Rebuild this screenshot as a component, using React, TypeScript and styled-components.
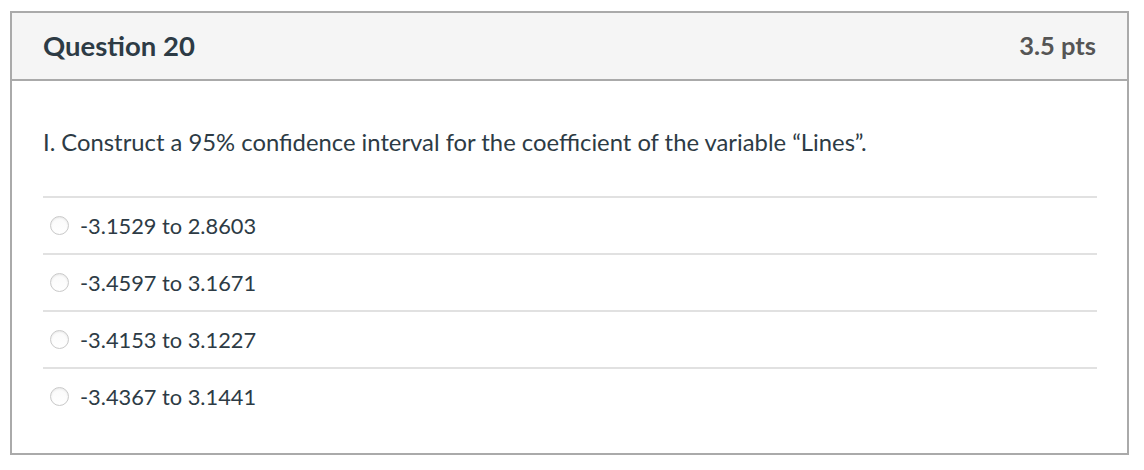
import React from "react";
import styled, { createGlobalStyle } from "styled-components";

const GlobalStyle = createGlobalStyle`
  body {
    margin: 0;
    background: #fff;
    font-family: Lato, "Open Sans", sans-serif;
    color: #2d3b45;
  }
`;

const Page = styled.div`
  padding: 11px 15px 13px 10px;
`;

const Card = styled.div`
  border: 2px solid #aaaaaa;
  background: #fff;
`;

const Header = styled.div`
  display: flex;
  align-items: center;
  justify-content: space-between;
  height: 66px;
  padding: 0 31px 0 31px;
  background: #f5f5f5;
  border-bottom: 2px solid #aaaaaa;
`;

const Title = styled.h2`
  margin: 0 0 1px;
  font-size: 27.5px;
  font-weight: 700;
  color: #2d3b45;
`;

const Points = styled.span`
  margin-bottom: 2px;
  font-size: 25.5px;
  font-weight: 700;
  color: #555555;
`;

const Body = styled.div`
  padding: 47px 30px 29px 31px;
`;

const Prompt = styled.p`
  margin: 0 0 40px;
  font-size: 23.8px;
  line-height: 28px;
`;

const AnswerRow = styled.label`
  display: flex;
  align-items: center;
  gap: 11px;
  height: 55px;
  padding-left: 7px;
  border-top: 2px solid #e1e1e1;
  font-size: 21.8px;
  color: #2d3b45;
`;

const Radio = styled.span`
  width: 17px;
  height: 17px;
  border-radius: 50%;
  border: 1px solid #c9c9c9;
  background: linear-gradient(#fafafa, #ffffff);
  box-shadow: inset 0 1px 2px rgba(0, 0, 0, 0.08);
`;

const answers = [
  "-3.1529 to 2.8603",
  "-3.4597 to 3.1671",
  "-3.4153 to 3.1227",
  "-3.4367 to 3.1441",
];

export default function App() {
  return (
    <Page>
      <GlobalStyle />
      <Card>
        <Header>
          <Title>Question 20</Title>
          <Points>3.5 pts</Points>
        </Header>
        <Body>
          <Prompt>
            I. Construct a 95% confidence interval for the coefficient of the variable “Lines”.
          </Prompt>
          {answers.map((a) => (
            <AnswerRow key={a}>
              <Radio />
              {a}
            </AnswerRow>
          ))}
        </Body>
      </Card>
    </Page>
  );
}
